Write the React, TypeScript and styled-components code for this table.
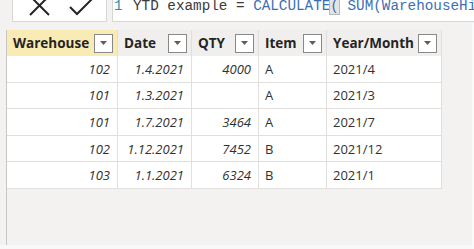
import styled, { createGlobalStyle } from "styled-components";

const rows = [
    { warehouse: 102, date: "1.4.2021", qty: "4000", item: "A", ym: "2021/4" },
    { warehouse: 101, date: "1.3.2021", qty: "", item: "A", ym: "2021/3" },
    { warehouse: 101, date: "1.7.2021", qty: "3464", item: "A", ym: "2021/7" },
    { warehouse: 102, date: "1.12.2021", qty: "7452", item: "B", ym: "2021/12" },
    { warehouse: 103, date: "1.1.2021", qty: "6324", item: "B", ym: "2021/1" },
];

const columns = ["Warehouse", "Date", "QTY", "Item", "Year/Month"];

const FilterIcon = () => (
    <svg width="7" height="4" viewBox="0 0 7 4">
        <path d="M0 0 L7 0 L3.5 4 Z" fill="#605e5c" />
    </svg>
);

const App = () => {
    return (
        <>
            <GlobalStyle />
            <Page>
                <TopBar>
                    <ActionBox>
                        <svg width="22" height="18" viewBox="0 0 22 18">
                            <path d="M1 -4 L20 15 M20 -4 L1 15" stroke="#252423" strokeWidth="2" fill="none" />
                        </svg>
                        <svg width="24" height="18" viewBox="0 0 24 18">
                            <path d="M1 7 L8 14 L23 -1" stroke="#252423" strokeWidth="2" fill="none" />
                        </svg>
                    </ActionBox>
                    <FormulaBox>
                        <Code>
                            <LineNo>1</LineNo>
                            {"YTD example = "}
                            <Fn>CALCULATE</Fn>
                            <Bracket>(</Bracket>
                            <Fn> SUM(WarehouseHistory[QTY])</Fn>
                        </Code>
                    </FormulaBox>
                </TopBar>
                <Body>
                    <Gutter />
                    <Canvas>
                        <Grid>
                            {columns.map((c, i) => (
                                <HeadCell key={c} selected={i === 0}>
                                    <span>{c}</span>
                                    <FilterButton>
                                        <FilterIcon />
                                    </FilterButton>
                                </HeadCell>
                            ))}
                            {rows.map((r, i) => (
                                <Row key={i}>
                                    <Cell num>{r.warehouse}</Cell>
                                    <Cell num>{r.date}</Cell>
                                    <Cell num>{r.qty}</Cell>
                                    <Cell>{r.item}</Cell>
                                    <Cell>{r.ym}</Cell>
                                </Row>
                            ))}
                        </Grid>
                    </Canvas>
                </Body>
            </Page>
        </>
    );
};

const GlobalStyle = createGlobalStyle`
    html, body {
        margin: 0;
        padding: 0;
        background: #f3f2f1;
        font-family: "Open Sans", "Noto Sans", sans-serif;
    }
`;

const Page = styled.div`
    width: 474px;
    height: 249px;
    overflow: hidden;
    background: #f3f2f1;
    display: flex;
    flex-direction: column;
`;

const TopBar = styled.div`
    height: 23px;
    display: flex;
    gap: 5px;
    padding-left: 12px;
    flex-shrink: 0;
`;

const ActionBox = styled.div`
    width: 95px;
    height: 22px;
    background: #fff;
    border: 1px solid #d8d6d4;
    border-top: none;
    box-sizing: border-box;
    display: flex;
    align-items: flex-start;
    gap: 18px;
    padding-left: 16px;
    svg {
        display: block;
    }
`;

const FormulaBox = styled.div`
    flex: 1;
    height: 22px;
    background: #fff;
    border: 1px solid #d8d6d4;
    border-top: none;
    border-right: none;
    box-sizing: border-box;
    overflow: hidden;
    padding-left: 1px;
`;

const Code = styled.div`
    font-family: "Liberation Mono", "DejaVu Sans Mono", monospace;
    font-size: 14.3px;
    line-height: 14px;
    margin-top: -1px;
    white-space: pre;
    color: #3b3a39;
`;

const LineNo = styled.span`
    display: inline-block;
    width: 19px;
    color: #2b91af;
`;

const Fn = styled.span`
    color: #3a6fb5;
`;

const Bracket = styled.span`
    color: #3a6fb5;
    background: #e4e4e4;
    outline: 1px solid #b9b9b9;
`;

const Body = styled.div`
    flex: 1;
    display: flex;
    padding-top: 7px;
    border-bottom: 4px solid #f8f8f8;
    border-right: 2px solid #fafafa;
`;

const Gutter = styled.div`
    width: 6px;
    border-right: 1px solid #c8c6c4;
    flex-shrink: 0;
`;

const Canvas = styled.div`
    flex: 1;
`;

const Grid = styled.div`
    display: grid;
    grid-template-columns: 111px 74px 67px 68px 115px;
    width: fit-content;
    font-size: 13px;
    color: #323130;
`;

const HeadCell = styled.div<{ selected?: boolean }>`
    height: 26px;
    box-sizing: border-box;
    display: flex;
    align-items: center;
    justify-content: space-between;
    padding: 0 4px 0 6px;
    background: ${(p) => (p.selected ? "#f9ebb4" : "#f0efee")};
    border-right: 1px solid #e1dfdd;
    font-weight: 700;
    font-size: 13.5px;
    color: #252423;
`;

const FilterButton = styled.div`
    width: 19px;
    height: 19px;
    box-sizing: border-box;
    background: #fff;
    border: 1px solid #8a8886;
    display: flex;
    align-items: center;
    justify-content: center;
`;

const Row = styled.div`
    display: contents;
`;

const Cell = styled.div<{ num?: boolean }>`
    height: 26.6px;
    box-sizing: border-box;
    display: flex;
    align-items: center;
    justify-content: ${(p) => (p.num ? "flex-end" : "flex-start")};
    padding: ${(p) => (p.num ? "0 7px 0 0" : "0 0 0 6px")};
    font-style: ${(p) => (p.num ? "italic" : "normal")};
    background: #fff;
    border-right: 1px solid #e1dfdd;
    border-bottom: 1px solid #e1dfdd;
`;

export default App;
